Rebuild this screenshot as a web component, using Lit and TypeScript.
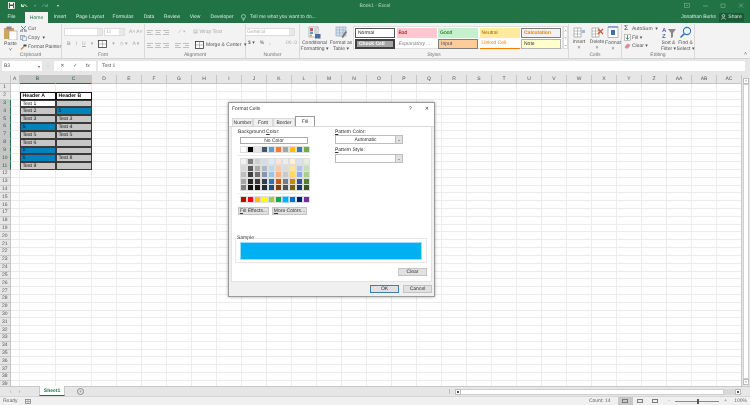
import { LitElement, html, css, svg } from 'lit';
import { customElement } from 'lit/decorators.js';
import { classMap } from 'lit/directives/class-map.js';

const COLS = ['A', 'B', 'C', 'D', 'E', 'F', 'G', 'H', 'I', 'J', 'K', 'L', 'M', 'N', 'O', 'P', 'Q', 'R', 'S', 'T', 'U', 'V', 'W', 'X', 'Y', 'Z', 'AA', 'AB', 'AC'];
const ROW_COUNT = 39;

// row -> [B, C]; '$' marks a blue filled cell
const DATA: Record<number, [string, string]> = {
  2: ['Header A', 'Header B'],
  3: ['Test 1', ''],
  4: ['Test 2', '$'],
  5: ['Test 3', 'Test 3'],
  6: ['$', 'Test 4'],
  7: ['Test 5', 'Test 5'],
  8: ['Test 6', ''],
  9: ['$', ''],
  10: ['$', 'Test 8'],
  11: ['Test 9', ''],
};

const THEME = ['#FFFFFF', '#000000', '#E7E6E6', '#44546A', '#5B9BD5', '#ED7D31', '#A5A5A5', '#FFC000', '#4472C4', '#70AD47'];
const SHADES = [
  ['#F2F2F2', '#7F7F7F', '#D0CECE', '#D6DCE4', '#DEEAF6', '#FBE5D5', '#EDEDED', '#FFF2CC', '#D9E2F3', '#E2EFD9'],
  ['#D8D8D8', '#595959', '#AEABAB', '#ADB9CA', '#BDD7EE', '#F7CAAC', '#DBDBDB', '#FEE599', '#B4C6E7', '#C5E0B3'],
  ['#BFBFBF', '#3F3F3F', '#757070', '#8496B0', '#9CC3E5', '#F4B183', '#C9C9C9', '#FFD965', '#8EAADB', '#A8D08D'],
  ['#A5A5A5', '#262626', '#3A3838', '#323F4F', '#2E74B5', '#C45911', '#7B7B7B', '#BF8F00', '#2F5496', '#538135'],
  ['#7F7F7F', '#0C0C0C', '#171616', '#222A35', '#1E4E79', '#833C0B', '#525252', '#7F6000', '#1F3864', '#375623'],
];
const STANDARD = ['#C00000', '#FF0000', '#FFC000', '#FFFF00', '#92D050', '#00B050', '#00B0F0', '#0070C0', '#002060', '#7030A0'];

const STYLES = [
  ['Normal', 's-normal'], ['Bad', 's-bad'], ['Good', 's-good'], ['Neutral', 's-neutral'], ['Calculation', 's-calc'],
  ['Check Cell', 's-check'], ['Explanatory ...', 's-expl'], ['Input', 's-input'], ['Linked Cell', 's-linked'], ['Note', 's-note'],
];

const TABS = [['File', 23], ['Home', 23], ['Insert', 24], ['Page Layout', 36], ['Formulas', 30], ['Data', 22], ['Review', 24], ['View', 22], ['Developer', 32]] as [string, number][];

const icon = (w: number, h: number, body: unknown) =>
  html`<svg width=${w} height=${h} viewBox="0 0 ${w} ${h}">${body}</svg>`;

const paste = icon(15, 14, svg`<rect x="1" y="2" width="10" height="11" fill="#d6a35c"/><rect x="3.5" y="0.5" width="5" height="3" fill="#8a8a8a"/><rect x="6" y="5" width="8" height="9" fill="#fff" stroke="#9a9a9a" stroke-width=".6"/>`);
const cut = icon(7, 6, svg`<path d="M1 0l4 4M6 0L2 4" stroke="#5a7fa8" fill="none"/><circle cx="1.5" cy="5" r="1" fill="none" stroke="#555" stroke-width=".6"/><circle cx="5.5" cy="5" r="1" fill="none" stroke="#555" stroke-width=".6"/>`);
const copy = icon(7, 6, svg`<rect x=".5" y=".5" width="4" height="4" fill="#dfe8f2" stroke="#6f8ba8" stroke-width=".6"/><rect x="2.5" y="1.8" width="4" height="4" fill="#eef3f8" stroke="#6f8ba8" stroke-width=".6"/>`);
const painter = icon(7, 6, svg`<path d="M1 5.5L4 2.5" stroke="#c9953f" stroke-width="1.2"/><rect x="3.5" y=".5" width="3" height="2" fill="#444"/>`);
const condFmt = icon(13, 13, svg`<rect x="1" y="1" width="9" height="10" fill="#fff" stroke="#8a8a8a" stroke-width=".6"/><rect x="2" y="2" width="3" height="3" fill="#d9534f"/><rect x="2" y="5.5" width="3" height="2.5" fill="#5b9bd5"/><rect x="2" y="8.5" width="2" height="2" fill="#e8a33d"/><rect x="6" y="2" width="3" height="6" fill="#c9d6e6"/><rect x="7" y="8" width="5.5" height="4.5" fill="#4a6f9c"/>`);
const fmtTable = icon(13, 13, svg`<rect x="1" y="1" width="10" height="9" fill="#d5e0ee" stroke="#8a9db5" stroke-width=".6"/><path d="M1 4h10M1 7h10M4.5 1v9M8 1v9" stroke="#8a9db5" stroke-width=".5"/><path d="M8 12l4-6-1.5-1L6.5 11z" fill="#777"/>`);
const insertIco = icon(13, 12, svg`<rect x="1" y="2" width="7" height="9" fill="#fff" stroke="#8a8a8a" stroke-width=".6"/><path d="M1 5h7M1 8h7M4.5 2v9" stroke="#8a8a8a" stroke-width=".5"/><rect x="8.5" y="4" width="3.5" height="3" fill="#9dbbe0"/>`);
const deleteIco = icon(13, 12, svg`<rect x="1" y="2" width="7" height="9" fill="#fff" stroke="#8a8a8a" stroke-width=".6"/><path d="M1 5h7M1 8h7M4.5 2v9" stroke="#8a8a8a" stroke-width=".5"/><path d="M7 3l5 5M12 3L7 8" stroke="#d8472b" stroke-width="1.1"/>`);
const formatIco = icon(13, 13, svg`<rect x="1" y="1.5" width="10" height="10" fill="#fff" stroke="#8a8a8a" stroke-width=".6"/><rect x="4" y="4" width="4" height="5" fill="#3f6ea8"/><path d="M1 .8h10" stroke="#5b8ac2"/>`);
const sumIco = html`<span class="sigma">Σ</span>`;
const fillIco = icon(7, 7, svg`<rect x=".5" y=".5" width="6" height="6" fill="#fff" stroke="#8a8a8a" stroke-width=".5"/><path d="M3.5 1v4M1.8 3.5l1.7 2 1.7-2" stroke="#2f6fb5" fill="none" stroke-width=".8"/>`);
const clearIco = icon(7, 6, svg`<path d="M.5 4l3-3.5L6.5 2 4 5.5H2z" fill="#e08a9a"/>`);
const sortIco = icon(14, 13, svg`<text x="0" y="5.5" font-size="6" font-family="Liberation Sans" fill="#6b5bb5" font-weight="700">A</text><text x="0" y="12" font-size="6" font-family="Liberation Sans" fill="#2f6fb5" font-weight="700">Z</text><path d="M6 3h8L11 7v4l-2 1V7z" fill="#8a8a8a"/>`);
const findIco = icon(13, 13, svg`<circle cx="8" cy="5" r="3.6" fill="none" stroke="#2b78c4" stroke-width="1.1"/><path d="M5.4 7.6L1.5 11.5" stroke="#2b78c4" stroke-width="1.5"/>`);
const gridIco = icon(9, 8, svg`<rect x=".5" y=".5" width="8" height="7" fill="#fff" stroke="#333" stroke-width=".8"/><path d="M.5 4h8M4.5 .5v7" stroke="#777" stroke-width=".5"/>`);
const lines = (anchor: 'l' | 'c' | 'r') => {
  const x1 = anchor === 'l' ? 0 : anchor === 'c' ? 1 : 2;
  const x2 = anchor === 'c' ? 5 : anchor === 'l' ? 4 : 6;
  return icon(6, 5, svg`<path d="M0 .5h6M${x1} 2.5H${x2}M0 4.5h6" stroke="#a9a9a9" stroke-width=".7"/>`);
};

@customElement('app-root')
export class AppRoot extends LitElement {
  static styles = css`
    :host {
      display: block;
      width: 750px;
      height: 405px;
      overflow: hidden;
      font-family: 'Liberation Sans', sans-serif;
      font-size: 5px;
      color: #444;
      background: #e6e6e6;
      text-rendering: geometricPrecision;
    }
    .app {
      position: relative;
      display: flex;
      flex-direction: column;
      width: 750px;
      height: 405px;
      filter: blur(0.25px);
    }
    svg { display: block; flex: none; }
    span { white-space: nowrap; }

    /* title bar + tabs */
    .title {
      height: 23px;
      flex: none;
      background: #217346;
      color: #cfe3d8;
      display: flex;
      flex-direction: column;
    }
    .qat {
      height: 11px;
      display: flex;
      align-items: center;
      padding-left: 8px;
      gap: 5px;
      position: relative;
    }
    .qat .book { position: absolute; left: 0; right: 0; text-align: center; color: #bcd7c8; }
    .win { margin-left: auto; display: flex; gap: 9px; padding-right: 4.5px; align-items: center; }
    .win svg:first-child { margin-right: 1.5px; }
    .tabs { height: 12px; display: flex; align-items: stretch; position: relative; }
    .tab { display: flex; align-items: center; justify-content: center; color: #dcebe3; white-space: nowrap; }
    .tab:first-child { margin-right: 2px; }
    .tab.on { background: #f3f3f3; color: #217346; margin-top: 1px; }
    .tell { display: flex; align-items: center; gap: 4px; margin-left: 3px; color: #cfe3d8; }
    .user { margin-left: auto; display: flex; align-items: center; gap: 3px; color: #dcebe3; }
    .share { width: 25px; height: 9px; background: #1a5c38; display: flex; align-items: center; justify-content: center; gap: 2px; margin-right: 6px; }

    /* ribbon */
    .ribbon {
      height: 36px;
      flex: none;
      background: #f3f3f3;
      display: flex;
      color: #555;
      border-bottom: 1px solid #d4d4d4;
      box-sizing: border-box;
      position: relative;
    }
    .grp {
      flex: none;
      display: flex;
      flex-direction: column;
      border-right: 1px solid #dadada;
      box-sizing: border-box;
      height: 34px;
      margin-top: 1px;
    }
    .grp .body { flex: 1; display: flex; min-height: 0; }
    .grp .cap { height: 6px; line-height: 6px; text-align: center; color: #777; }
    .col { display: flex; flex-direction: column; }
    .rowl { display: flex; align-items: center; }
    .big { display: flex; flex-direction: column; align-items: center; line-height: 6px; text-align: center; flex: none; }
    .big svg { margin-bottom: 1px; }
    .dim { color: #a8a8a8; }
    .sigma { font-size: 7px; line-height: 6px; width: 7px; color: #444; }
    .inp { height: 8px; background: #fff; border: 1px solid #dcdcdc; box-sizing: border-box; color: #b0b0b0; display: flex; align-items: center; padding-left: 1px; }
    .inp .dd { margin-left: auto; width: 5px; height: 100%; background: #e8e8e8; }
    .gallery {
      display: grid;
      grid-template-columns: repeat(5, 40px);
      grid-template-rows: 9.5px 9.5px;
      gap: 1.5px;
      background: #fff;
      padding: 1.5px 1px;
      margin-top: 1.5px;
      height: 23px;
      box-sizing: border-box;
      border: 1px solid #e0e0e0;
    }
    .st { display: flex; align-items: center; padding-left: 2px; box-sizing: border-box; white-space: nowrap; overflow: hidden; }
    .s-normal { border: 1px solid #555; color: #222; background: #fff; }
    .s-bad { background: #ffc7ce; color: #9c0006; }
    .s-good { background: #c6efce; color: #006100; }
    .s-neutral { background: #ffeb9c; color: #9c6500; }
    .s-calc { background: #f2f2f2; color: #fa7d00; font-weight: 700; border: 1px solid #7f7f7f; }
    .s-check { background: #a5a5a5; color: #fff; font-weight: 700; border: 2px solid #3f3f3f; }
    .s-expl { color: #7f7f7f; font-style: italic; }
    .s-input { background: #ffcc99; color: #3f3f76; border: 1px solid #7f7f7f; }
    .s-linked { color: #fa7d00; border-bottom: 1px solid #fa7d00; }
    .s-note { background: #ffffcc; color: #333; border: 1px solid #b2b2b2; }
    .gscroll { width: 5px; display: flex; flex-direction: column; margin-top: 1.5px; height: 23px; background: #fff; border: 1px solid #dcdcdc; box-sizing: border-box; font-size: 4px; text-align: center; line-height: 7px; }
    .collapse { position: absolute; right: 3px; bottom: 1px; color: #666; }

    /* formula bar */
    .fbar { height: 16px; flex: none; display: flex; align-items: center; background: #e6e6e6; padding: 0 5px 2px 2px; box-sizing: border-box; }
    .fbar .box { height: 10px; background: #fff; display: flex; align-items: center; color: #555; box-sizing: border-box; padding: 0 2px; }
    .namebox { width: 40px; justify-content: space-between; }
    .dots { width: 12px; text-align: center; color: #aaa; }
    .fxb { width: 42px; justify-content: space-around; color: #aaa; margin-right: 2px; }
    .formula { flex: 1; padding-left: 4px !important; }

    /* sheet */
    .sheet { flex: 1; display: flex; background: #e6e6e6; min-height: 0; position: relative; overflow: hidden; }
    .grid {
      display: grid;
      grid-template-columns: 10.5px 9.5px 36px 36px repeat(26, 25px);
      grid-template-rows: 9px repeat(${ROW_COUNT}, 7.82px);
      flex: none;
      width: 742px;
      overflow: hidden;
      background: #fff;
      border-right: 1px solid #c8c8c8;
      box-sizing: border-box;
    }
    .hd { background: #e6e6e6; color: #555; display: flex; align-items: center; justify-content: center; border-right: 1px solid #c6c6c6; border-bottom: 1px solid #c6c6c6; box-sizing: border-box; }
    .hd.sel { background: #c6c6c6; color: #1f5f3c; border-bottom-color: #217346; }
    .hd.rsel { background: #c6c6c6; color: #1f5f3c; border-right: 1px solid #217346; }
    .cell { border-right: 1px solid #ececec; border-bottom: 1px solid #ececec; box-sizing: border-box; display: flex; align-items: center; padding-left: 1.5px; color: #111; white-space: nowrap; overflow: hidden; font-size: 5.2px; }
    .cell.box { border: 1px solid #3a3a3a; }
    .cell.gray { background: #c6c6c6; }
    .cell.act { background: #fff; }
    .cell.blue { background: #0083bd; color: #06263a; }
    .cell.head { font-weight: 700; border-color: #111; }
    .vscroll { flex: 1; display: flex; flex-direction: column; padding: 3px 1px 0 1px; gap: 0; box-sizing: border-box; }
    .vthumb { flex: none; height: 295px; background: #fff; border: 1px solid #cfcfcf; box-sizing: border-box; }
    .varr { flex: none; height: 6px; background: #fff; border: 1px solid #bdbdbd; box-sizing: border-box; color: #555; font-size: 4px; line-height: 4px; text-align: center; }

    /* sheet tabs + status */
    .stabs { height: 11px; flex: none; background: #e6e6e6; border-top: 1px solid #c8c8c8; border-bottom: 1px solid #d6d6d6; box-sizing: border-box; display: flex; align-items: stretch; color: #999; }
    .nav { width: 39px; display: flex; gap: 7px; align-items: center; padding-left: 10px; box-sizing: border-box; }
    .sheet-tab { width: 26px; background: #fff; color: #217346; font-weight: 700; display: flex; align-items: center; justify-content: center; border-bottom: 1px solid #217346; border-left: 1px solid #c8c8c8; border-right: 1px solid #c8c8c8; box-sizing: border-box; margin-top: -1px; }
    .addsheet { width: 7px; height: 7px; border-radius: 50%; border: 1px solid #8a8a8a; margin: 1px 0 0 12px; line-height: 6px; text-align: center; color: #666; box-sizing: border-box; }
    .hscroll { margin-left: auto; display: flex; align-items: center; margin-right: 9px; }
    .hdiv { width: 1px; height: 5px; background: #bdbdbd; margin-right: 5px; }
    .hthumb { width: 263px; height: 6px; background: #fff; border: 1px solid #cfcfcf; border-left: 0; box-sizing: border-box; }
    .htrack { width: 11px; height: 6px; background: #d8d8d8; }
    .arr { width: 6px; height: 6px; background: #fff; border: 1px solid #bdbdbd; box-sizing: border-box; display: flex; align-items: center; justify-content: center; }
    .arr i { display: block; width: 1.5px; height: 2px; background: #555; }
    .status { height: 8px; flex: none; background: #f0f0f0; display: flex; align-items: center; padding-left: 3px; color: #666; }
    .status .r { margin-left: auto; display: flex; align-items: center; height: 100%; }
    .view { width: 15px; height: 8px; display: flex; align-items: center; justify-content: center; }
    .view.on { background: #c8c8c8; }
    .view i { display: block; width: 6px; height: 4.5px; border: 1px solid #7a7a7a; box-sizing: border-box; }
    .slider { width: 44px; height: 1px; background: #888; position: relative; margin: 0 5px; }
    .slider b { position: absolute; left: 22px; top: -2px; width: 1.5px; height: 5px; background: #555; }

    /* dialog */
    .dlg {
      position: absolute;
      left: 228px;
      top: 102px;
      width: 207px;
      height: 195px;
      box-sizing: border-box;
      background: #f0f0f0;
      border: 1px solid #9a9a9a;
      box-shadow: 0 0 3px rgba(0, 0, 0, .35);
      display: flex;
      flex-direction: column;
      color: #333;
    }
    .dtitle { height: 12px; background: #fff; display: flex; align-items: center; padding: 0 5px 0 3px; flex: none; }
    .dtitle .q { margin-left: auto; margin-right: 13px; }
    .dtabs { height: 12px; background: #fff; display: flex; align-items: flex-end; padding-left: 3px; flex: none; border-bottom: 1px solid #d9d9d9; box-sizing: border-box; }
    .dtab { height: 8px; display: flex; align-items: center; justify-content: center; background: #f0f0f0; border: 1px solid #d9d9d9; border-bottom: 0; box-sizing: border-box; }
    .dtab.on { background: #fff; height: 10px; border-color: #9a9a9a; }
    .panel { height: 155px; flex: none; background: #fff; margin: 0 2px; padding: 2px 4px 0 3px; box-sizing: border-box; display: flex; flex-direction: column; border: 1px solid #e3e3e3; border-top: 0; }
    .cols { display: flex; height: 108px; flex: none; padding-left: 3px; }
    .left { width: 97px; display: flex; flex-direction: column; flex: none; }
    .right { display: flex; flex-direction: column; }
    .lab { height: 6px; line-height: 6px; }
    .nocolor { width: 68px; height: 7px; margin: 2px 0 0 2px; border: 1px solid #aaa; box-sizing: border-box; display: flex; align-items: center; justify-content: center; }
    .sw { display: grid; grid-template-columns: repeat(10, 5px); column-gap: 2.05px; row-gap: 1.5px; padding-left: 2.5px; }
    .sw i { display: block; width: 5px; height: 5px; box-sizing: border-box; outline: .3px solid #dedede; }
    .sw i.picked { outline: 1px solid #9cd3f2; }
    .sep { height: 1px; background: #ececec; margin: 3px 0 3px; width: 71px; }
    .combo { width: 68px; height: 9px; border: 1px solid #bdbdbd; box-sizing: border-box; display: flex; align-items: center; background: #fff; }
    .combo span { flex: 1; text-align: center; }
    .combo .dd { flex: none; width: 7px; height: 100%; background: #e1e1e1; border-left: 1px solid #bdbdbd; box-sizing: border-box; font-size: 4px; line-height: 7px; }
    .btn { height: 8px; background: #e1e1e1; border: 1px solid #c4c4c4; box-sizing: border-box; display: flex; align-items: center; justify-content: center; flex: none; white-space: nowrap; }
    .fx { display: flex; gap: 3px; margin-top: 5px; }
    .fieldset { position: relative; height: 25px; border: 1px solid #e6e6e6; margin-top: 1px; padding: 4px; box-sizing: border-box; flex: none; }
    .legend { position: absolute; left: 1px; top: -3px; background: #fff; padding-right: 1px; line-height: 5px; }
    .sample { height: 18px; background: #00b0f0; border: 1px solid #9cdcf7; box-sizing: border-box; margin: -1px 0 0; }
    .clear { width: 29px; align-self: flex-end; margin-top: 5px; }
    .dfoot { flex: 1; display: flex; justify-content: flex-end; align-items: center; gap: 4px; padding-right: 2px; }
    .dfoot .btn { width: 29px; height: 8.5px; }
    .ok { border: 1.5px solid #3c7fb1 !important; }
  `;

  private group(width: number, caption: string, body: unknown) {
    return html`<div class="grp" style="width:${width}px">
      <div class="body">${body}</div>
      <div class="cap">${caption}</div>
    </div>`;
  }

  private renderRibbon() {
    return html`<div class="ribbon">
      ${this.group(62, 'Clipboard', html`
        <div class="big" style="width:19px;padding:2px 0 0 1px">${paste}<span>Paste</span><span>˅</span></div>
        <div class="col" style="gap:3px;padding-top:2px">
          <div class="rowl" style="gap:1px">${cut}<span>Cut</span></div>
          <div class="rowl" style="gap:1px">${copy}<span>Copy &nbsp;▾</span></div>
          <div class="rowl" style="gap:1px">${painter}<span>Format Painter</span></div>
        </div>`)}
      ${this.group(83, 'Font', html`
        <div class="col" style="padding:4px 0 0 2px;gap:4px">
          <div class="rowl" style="gap:1px">
            <div class="inp" style="width:39px"><span class="dd"></span></div>
            <div class="inp" style="width:21px">11<span class="dd"></span></div>
            <span class="dim" style="margin-left:3px">A˄ A˅</span>
          </div>
          <div class="rowl dim" style="gap:5px;padding-left:3px">
            <b>B</b><i>I</i><u>U</u><span>▾</span>
            ${gridIco}<span>▾</span><span>◇ ▾</span><span>A ▾</span>
          </div>
        </div>`)}
      ${this.group(101, 'Alignment', html`
        <div class="col" style="padding:5px 0 0 2px;gap:6px">
          <div class="rowl" style="gap:2px">
            ${lines('l')}${lines('c')}${lines('r')}<span class="dim" style="margin:0 6px 0 7px">⟋ ▾</span>
            <span class="dim">▤ Wrap Text</span>
          </div>
          <div class="rowl" style="gap:2px">
            ${lines('l')}${lines('c')}${lines('r')}<span style="width:2px"></span>${lines('l')}${lines('r')}
            <span style="width:2px"></span>${gridIco}<span>Merge &amp; Center &nbsp;▾</span>
          </div>
        </div>`)}
      ${this.group(54, 'Number', html`
        <div class="col" style="padding:4px 0 0 0;gap:4px">
          <div class="inp" style="width:49px;border-left:0">General<span class="dd"></span></div>
          <div class="rowl" style="gap:5px;padding-left:2px"><span>$ ▾</span><span>%</span><span>,</span><span style="width:4px"></span><span class="dim">.00 .0</span></div>
        </div>`)}
      ${this.group(269, 'Styles', html`
        <div class="big" style="width:29px;padding-top:2px">${condFmt}<span>Conditional</span><span>Formatting ▾</span></div>
        <div class="big" style="width:24px;padding-top:2px">${fmtTable}<span>Format as</span><span>Table ▾</span></div>
        <div class="gallery">${STYLES.map(([t, c]) => html`<div class="st ${c}">${t}</div>`)}</div>
        <div class="gscroll"><span>˄</span><span>˅</span><span>⌄</span></div>`)}
      ${this.group(53, 'Cells', html`
        <div class="big" style="width:20px;padding-top:2px">${insertIco}<span>Insert</span><span>˅</span></div>
        <div class="big" style="width:16px;padding-top:2px">${deleteIco}<span>Delete</span><span>˅</span></div>
        <div class="big" style="width:16px;padding-top:2px">${formatIco}<span>Format</span><span>˅</span></div>`)}
      ${this.group(73, 'Editing', html`
        <div class="col" style="width:38px;padding:2px 0 0 2px;gap:2px;box-sizing:border-box">
          <div class="rowl" style="gap:1px">${sumIco}<span>AutoSum &nbsp;▾</span></div>
          <div class="rowl" style="gap:1px">${fillIco}<span>Fill ▾</span></div>
          <div class="rowl" style="gap:1px">${clearIco}<span>Clear ▾</span></div>
        </div>
        <div class="big" style="width:17px;padding-top:2px">${sortIco}<span>Sort &amp;</span><span>Filter ▾</span></div>
        <div class="big" style="width:17px;padding-top:2px">${findIco}<span>Find &amp;</span><span>Select ▾</span></div>`)}
      <span class="collapse">˄</span>
    </div>`;
  }

  private renderCell(row: number, col: string) {
    const idx = col === 'B' ? 0 : col === 'C' ? 1 : -1;
    const val = idx >= 0 && DATA[row] ? DATA[row][idx] : '';
    const inTable = idx >= 0 && row >= 2 && row <= 11;
    const inSel = inTable && row >= 3;
    const classes = {
      cell: true,
      box: inTable,
      head: row === 2 && inTable,
      gray: inSel && val !== '$',
      blue: inTable && val === '$',
      act: row === 3 && col === 'B',
    };
    return html`<div class=${classMap(classes)}>${val}</div>`;
  }

  private renderSheet() {
    const rows = Array.from({ length: ROW_COUNT }, (_, i) => i + 1);
    return html`<div class="sheet">
      <div class="grid">
        <div class="hd"></div>
        ${COLS.map(c => html`<div class="hd ${c === 'B' || c === 'C' ? 'sel' : ''}">${c}</div>`)}
        ${rows.map(r => html`
          <div class="hd ${r >= 3 && r <= 11 ? 'rsel' : ''}">${r}</div>
          ${COLS.map(c => this.renderCell(r, c))}
        `)}
      </div>
      <div class="vscroll">
        <div class="varr">˄</div>
        <div class="vthumb"></div>
        <div class="varr">˅</div>
      </div>
    </div>`;
  }

  private renderDialog() {
    return html`<div class="dlg">
      <div class="dtitle">Format Cells<span class="q">?</span><span>✕</span></div>
      <div class="dtabs">
        <div class="dtab" style="width:21px">Number</div>
        <div class="dtab" style="width:20px">Font</div>
        <div class="dtab" style="width:22px">Border</div>
        <div class="dtab on" style="width:20px">Fill</div>
      </div>
      <div class="panel">
        <div class="cols">
          <div class="left">
            <div class="lab">Background <u>C</u>olor:</div>
            <div class="nocolor">No Color</div>
            <div class="sw" style="margin-top:3px">${THEME.map(c => html`<i style="background:${c}"></i>`)}</div>
            <div class="sep"></div>
            <div class="sw">${SHADES.flat().map(c => html`<i style="background:${c}"></i>`)}</div>
            <div class="sep"></div>
            <div class="sw">${STANDARD.map((c, i) => html`<i class=${i === 6 ? 'picked' : ''} style="background:${c}"></i>`)}</div>
            <div class="fx">
              <div class="btn" style="width:31px"><span><u>F</u>ill Effects...</span></div>
              <div class="btn" style="width:35px"><span><u>M</u>ore Colors...</span></div>
            </div>
          </div>
          <div class="right">
            <div class="lab"><u>P</u>attern Color:</div>
            <div class="combo"><span>Automatic</span><span class="dd">⌄</span></div>
            <div class="lab" style="margin-top:3px"><u>P</u>attern Style:</div>
            <div class="combo" style="margin-top:1px"><span></span><span class="dd">⌄</span></div>
          </div>
        </div>
        <div class="fieldset">
          <span class="legend">Sample</span>
          <div class="sample"></div>
        </div>
        <div class="btn clear">Clear</div>
      </div>
      <div class="dfoot">
        <div class="btn ok">OK</div>
        <div class="btn">Cancel</div>
      </div>
    </div>`;
  }

  render() {
    return html`<div class="app">
      <div class="title">
        <div class="qat">
          <span class="book">Book1 - Excel</span>
          ${icon(7, 7, svg`<rect x=".5" y=".5" width="6" height="6" fill="none" stroke="#fff" stroke-width=".8"/><rect x="2" y=".5" width="3" height="2" fill="#fff"/><rect x="2" y="4" width="3" height="2.5" fill="#fff"/>`)}
          ${icon(9, 6, svg`<path d="M1.5 1v2.5H4M2 3.3c1.5-2 4-1.8 5 .7" fill="none" stroke="#fff" stroke-width=".8"/>`)}
          <span style="color:#6da588;font-size:4px">▾</span>
          ${icon(8, 6, svg`<path d="M6.5 1v2.5H4M6 3.3c-1.5-2-4-1.8-5 .7" fill="none" stroke="#6da588" stroke-width=".8"/>`)}
          <span style="color:#cfe3d8;font-size:4px;margin-left:3px">▾</span>
          <div class="win">
            ${icon(6, 5, svg`<rect x=".5" y=".5" width="5" height="4" fill="none" stroke="#7fb096" stroke-width=".6"/><path d="M2 2.5h2" stroke="#7fb096" stroke-width=".6"/>`)}
            ${icon(9, 5, svg`<path d="M2 3h5" stroke="#7fb096" stroke-width=".7"/>`)}
            ${icon(9, 5, svg`<rect x="2" y="1" width="4" height="3.5" fill="none" stroke="#7fb096" stroke-width=".6"/>`)}
            ${icon(9, 5, svg`<path d="M2 .5l4 4M6 .5l-4 4" stroke="#7fb096" stroke-width=".7"/>`)}
          </div>
        </div>
        <div class="tabs">
          ${TABS.map(([t, w]) => html`<div class="tab ${t === 'Home' ? 'on' : ''}" style="width:${w}px">${t}</div>`)}
          <div class="tell">
            ${icon(5, 7, svg`<circle cx="2.5" cy="2.5" r="2" fill="none" stroke="#dcebe3" stroke-width=".6"/><path d="M1.5 5.5h2M2 6.6h1" stroke="#dcebe3" stroke-width=".6"/>`)}
            <span>Tell me what you want to do...</span>
          </div>
          <div class="user">
            <span>Jonathan Burks</span>
            <div class="share">
              ${icon(5, 6, svg`<circle cx="2.5" cy="1.8" r="1.3" fill="none" stroke="#fff" stroke-width=".6"/><path d="M.5 5.5c.3-2 3.7-2 4 0" fill="none" stroke="#fff" stroke-width=".6"/>`)}
              <span>Share</span>
            </div>
          </div>
        </div>
      </div>
      ${this.renderRibbon()}
      <div class="fbar">
        <div class="box namebox"><span>B3</span><span style="font-size:4px">▾</span></div>
        <div class="dots">⋮</div>
        <div class="box fxb"><span>✕</span><span>✓</span><i style="color:#555">fx</i></div>
        <div class="box formula">Test 1</div>
      </div>
      ${this.renderSheet()}
      <div class="stabs">
        <div class="nav"><span>‹</span><span>›</span></div>
        <div class="sheet-tab">Sheet1</div>
        <div class="addsheet">+</div>
        <div class="hscroll">
          <div class="hdiv"></div>
          <div class="arr"><i></i></div>
          <div class="hthumb"></div>
          <div class="htrack"></div>
          <div class="arr"><i></i></div>
        </div>
      </div>
      <div class="status">
        <span>Ready</span>
        <span style="margin-left:8px">${icon(6, 5, svg`<rect x=".5" y=".5" width="5" height="4" fill="none" stroke="#777" stroke-width=".7"/><path d="M.5 2.5h5M3 .5v4" stroke="#777" stroke-width=".5"/>`)}</span>
        <div class="r">
          <span style="margin-right:7px">Count: 14</span>
          <div class="view on"><i></i></div>
          <div class="view"><i></i></div>
          <div class="view"><i></i></div>
          <span style="margin-left:6px">-</span>
          <div class="slider"><b></b></div>
          <span>+</span>
          <span style="margin:0 3px 0 7px">100%</span>
        </div>
      </div>
      ${this.renderDialog()}
    </div>`;
  }
}
